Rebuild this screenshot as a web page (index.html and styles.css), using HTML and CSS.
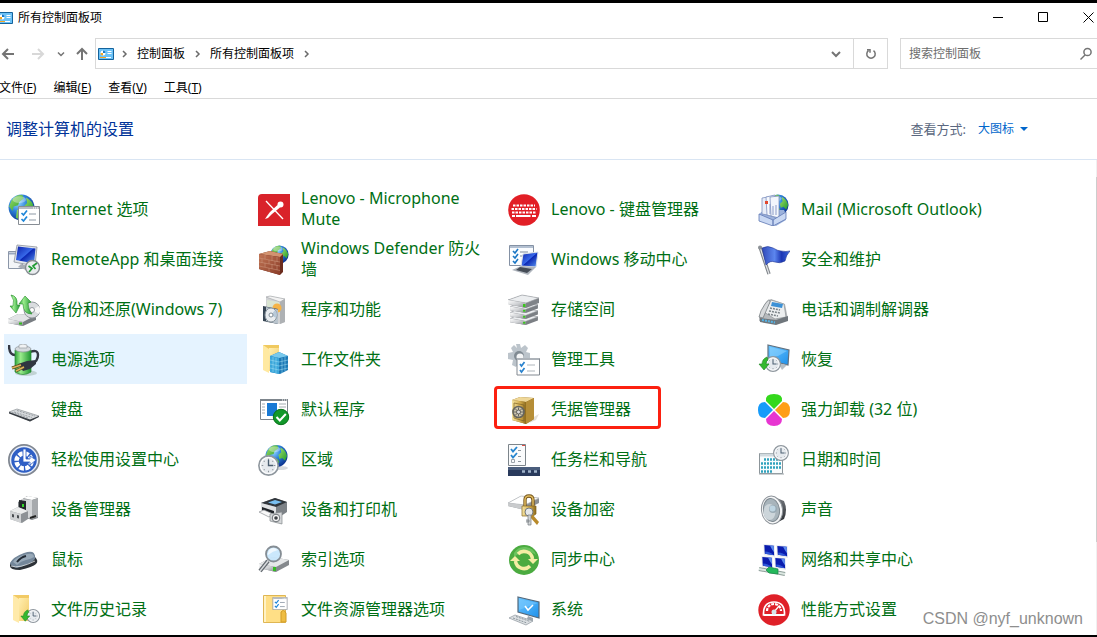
FILE: index.html
```html
<!DOCTYPE html>
<html lang="zh-CN">
<head>
  <meta charset="UTF-8">
  <meta name="viewport" content="width=device-width, initial-scale=1.0">
  <title>所有控制面板项</title>
  <link rel="stylesheet" href="styles.css">
</head>
<body>

<!-- shared gradients and icon parts -->
<svg class="defs" width="0" height="0" aria-hidden="true">
  <defs>
    <radialGradient id="sea" cx=".35" cy=".3" r=".75"><stop offset="0" stop-color="#9fdcff"/><stop offset=".45" stop-color="#2f86dd"/><stop offset="1" stop-color="#0a2f8c"/></radialGradient>
    <linearGradient id="land" x2="1" y2="1"><stop offset="0" stop-color="#a5e06a"/><stop offset="1" stop-color="#1f9a2c"/></linearGradient>
    <linearGradient id="screen" x2="1" y2="1"><stop offset="0" stop-color="#0b1fa8"/><stop offset=".48" stop-color="#3768e8"/><stop offset=".52" stop-color="#0c28b4"/><stop offset="1" stop-color="#5f9cf5"/></linearGradient>
    <linearGradient id="sky" x2="1" y2="1"><stop offset="0" stop-color="#6cc6ff"/><stop offset="1" stop-color="#1e90ea"/></linearGradient>
    <linearGradient id="metal" x2="1" y2="1"><stop offset="0" stop-color="#ffffff"/><stop offset=".5" stop-color="#cfd1d4"/><stop offset="1" stop-color="#85888c"/></linearGradient>
    <linearGradient id="dark" x2="0" y2="1"><stop offset="0" stop-color="#75797f"/><stop offset="1" stop-color="#24272b"/></linearGradient>
    <linearGradient id="folder" x2="1" y2="1"><stop offset="0" stop-color="#ffeeb0"/><stop offset="1" stop-color="#f3cb66"/></linearGradient>
    <linearGradient id="gold" x2="1" y2="0"><stop offset="0" stop-color="#f5e3a0"/><stop offset=".6" stop-color="#cfa84a"/><stop offset="1" stop-color="#8c6a1d"/></linearGradient>
    <linearGradient id="green" x2="1" y2="0"><stop offset="0" stop-color="#2fa33a"/><stop offset=".35" stop-color="#9aec8c"/><stop offset="1" stop-color="#1d9430"/></linearGradient>
    <linearGradient id="brick" x2="1" y2="1"><stop offset="0" stop-color="#c07555"/><stop offset="1" stop-color="#8a3c28"/></linearGradient>
    <linearGradient id="flag" x2="1" y2="0"><stop offset="0" stop-color="#3049b8"/><stop offset=".45" stop-color="#5c86ee"/><stop offset=".7" stop-color="#1c36b4"/><stop offset="1" stop-color="#3c68dd"/></linearGradient>

    <symbol id="globe" viewBox="0 0 24 24">
      <circle cx="12" cy="12" r="11.5" fill="url(#sea)"/>
      <path d="M3 6Q7 0 13 1L14 4 10 7 9 10 5 11 4 15 1 11Z" fill="url(#land)"/>
      <path d="M16 3Q22 6 23 12L21 17 18 14 15 15 14 11 17 8Z" fill="url(#land)"/>
      <path d="M8 14L13 15 15 18 11 23 7 21Z" fill="url(#land)"/>
      <ellipse cx="10" cy="5" rx="6" ry="3" fill="#fff" opacity=".35"/>
    </symbol>
    <symbol id="clock" viewBox="0 0 20 20">
      <circle cx="10" cy="10" r="9.2" fill="#e6eaee" stroke="#8f979e" stroke-width="1.5"/>
      <circle cx="10" cy="10" r="7.6" fill="none" stroke="#fff"/>
      <path d="M10 3.5V5M10 15v1.500M3.500 10H5M15 10h1.500M5.500 5.500l.8.8M14.500 5.500l-.8.8M5.500 14.500l.8-.8M14.500 14.500l-.8-.8" stroke="#8b9299"/>
      <path d="M10 4.500V10H14.500" fill="none" stroke="#4b5e70" stroke-width="1.300"/>
    </symbol>
    <symbol id="checks" viewBox="0 0 22 19">
      <path d="M.5.5h21v18H.5Z" fill="#fff" stroke="#878d94"/>
      <path d="M1 1h20v2H1Z" fill="#b7bcc2"/>
      <path d="M15 2h1M17 2h1M19 2h1" stroke="#fff"/>
      <path d="M3.500 7l2 2 3.500-4.500M3.500 13l2 2 3.500-4.500" fill="none" stroke="#1f86d8" stroke-width="1.700"/>
      <path d="M11 8h7M11 14h7" stroke="#8d99a6" stroke-width="1.200"/>
    </symbol>
    <symbol id="panel" viewBox="0 0 16 12">
      <path d="M.5.5h15v11H.5Z" fill="#6cc2f7" stroke="#14639c"/>
      <circle cx="5" cy="5" r="2.500" fill="#fff"/>
      <path d="M5 5V2.500A2.500 2.500 0 0 1 7.500 5Z" fill="#1478c8"/>
      <path d="M5 5H2.500A2.500 2.500 0 0 0 5 7.500Z" fill="#f5a623"/>
      <path d="M9.500 3.500h4M9.500 5.500h4" stroke="#fff"/>
      <path d="M2 9.500h6" stroke="#f5a623"/><path d="M8 9.500h5" stroke="#fff"/>
    </symbol>
    <symbol id="drive" viewBox="0 0 32 14">
      <path d="M1 6L13 1 31 4V8L18 13 1 10Z" fill="#7b7f84"/>
      <path d="M1 6L13 1 31 4 18 9Z" fill="#eceef0" stroke="#9a9ea3" stroke-width=".6"/>
      <path d="M1 6L18 9V13L1 10Z" fill="url(#metal)"/>
      <path d="M15 9.500h2.500v2H15Z" fill="#39c51d"/>
    </symbol>
    <symbol id="back-clock" viewBox="0 0 24 18">
      <use href="#clock" x="7" y="1" width="16" height="16"/>
      <path d="M9 2Q4 4 4 9H1L6 15 11 9H8Q8 6 10 5Z" fill="#35b82f" stroke="#1b8420" stroke-width=".6"/>
    </symbol>
    <symbol id="pc" viewBox="0 0 14 15">
      <path d="M1 0L13 1 13.500 14 1.500 12Z" fill="#e8ebef"/>
      <path d="M2 1L12 2 12.500 12 2.500 10.500Z" fill="#0a1cae"/>
      <path d="M8 1.700L12 2 12.500 9Q10 6 8 1.700Z" fill="#5d8bee"/>
      <path d="M3 8Q8 8 12 12L3 10.500Z" fill="#2f58d8"/>
    </symbol>
  </defs>
</svg>

<div class="window">
  <header class="titlebar">
    <svg class="title-icon" viewBox="0 0 16 12"><use href="#panel"/></svg>
    <h1 class="title">所有控制面板项</h1>
    <div class="window-buttons">
      <button class="window-btn" aria-label="最小化"><svg viewBox="0 0 11 11"><path d="M0 5.500h10"/></svg></button>
      <button class="window-btn" aria-label="最大化"><svg viewBox="0 0 11 11"><path d="M.5.5h9v9h-9Z"/></svg></button>
      <button class="window-btn" aria-label="关闭"><svg viewBox="0 0 11 11"><path d="M.5.5l10 10M10.500.5l-10 10"/></svg></button>
    </div>
  </header>

  <div class="toolbar">
    <nav class="history">
      <button class="nav-btn" aria-label="后退"><svg viewBox="0 0 14 14"><path d="M13 7H2M7 2L2 7l5 5"/></svg></button>
      <button class="nav-btn disabled" aria-label="前进" disabled><svg viewBox="0 0 14 14"><path d="M1 7h11M7 2l5 5-5 5"/></svg></button>
      <button class="nav-btn small" aria-label="最近浏览的位置"><svg viewBox="0 0 8 14"><path d="M1 5.500l3 3 3-3"/></svg></button>
      <button class="nav-btn" aria-label="上移"><svg viewBox="0 0 14 14"><path d="M7 13V2M2 7l5-5 5 5"/></svg></button>
    </nav>
    <div class="address">
      <svg class="address-icon" viewBox="0 0 16 12"><use href="#panel"/></svg>
      <svg class="chevron" viewBox="0 0 6 8"><path d="M1 1l3 3-3 3"/></svg>
      <a class="crumb" href="#">控制面板</a>
      <svg class="chevron" viewBox="0 0 6 8"><path d="M1 1l3 3-3 3"/></svg>
      <a class="crumb" href="#">所有控制面板项</a>
      <svg class="chevron" viewBox="0 0 6 8"><path d="M1 1l3 3-3 3"/></svg>
      <button class="address-btn drop" aria-label="以前的位置"><svg viewBox="0 0 14 14"><path d="M3 5l4 4 4-4"/></svg></button>
      <button class="address-btn refresh" aria-label="刷新"><svg viewBox="0 0 14 14"><path d="M9.500 3.600A4.200 4.200 0 1 1 4.500 3.600M3 2.700h3v3"/></svg></button>
    </div>
    <div class="search">
      <input class="search-input" type="text" placeholder="搜索控制面板" aria-label="搜索控制面板">
      <svg class="search-icon" viewBox="0 0 14 14"><circle cx="8.500" cy="5" r="3.600"/><path d="M6 8L1.500 12.500"/></svg>
    </div>
  </div>

  <nav class="menubar">
    <button class="menu">文件(<u>F</u>)</button>
    <button class="menu">编辑(<u>E</u>)</button>
    <button class="menu">查看(<u>V</u>)</button>
    <button class="menu">工具(<u>T</u>)</button>
  </nav>

  <div class="heading">
    <h2 class="heading-text">调整计算机的设置</h2>
    <div class="view-by">
      <label class="view-label" for="view">查看方式:</label>
      <select class="view-select" id="view">
        <option>大图标</option>
        <option>小图标</option>
        <option>类别</option>
      </select>
      <svg class="caret" viewBox="0 0 8 4"><path d="M0 0h8L4 4Z"/></svg>
    </div>
  </div>

  <div class="content">
    <main class="items">
      <a class="item" href="#">
        <svg class="icon" viewBox="0 0 32 32"><use href="#globe" width="27" height="27"/><use href="#checks" x="10" y="12" width="22" height="19"/></svg>
        <span>Internet 选项</span>
      </a>
      <a class="item" href="#">
        <svg class="icon" viewBox="0 0 32 32"><path d="M4 0H32V32H0V4Q0 0 4 0Z" fill="#d9232a"/><path d="M8 7L25 25" stroke="#fff" stroke-width="1.300"/><circle cx="22.500" cy="10.500" r="3" fill="#fff"/><path d="M19.500 11L22 13.500 14 20 10 24 7 25 9 22 12 18Z" fill="#fff"/></svg>
        <span>Lenovo - Microphone Mute</span>
      </a>
      <a class="item" href="#">
        <svg class="icon" viewBox="0 0 32 32"><circle cx="16" cy="16" r="15.800" fill="#e21f26"/><path d="M5 11.500h22M3.500 15h25M4 18.500h24" stroke="#fff" stroke-width="2.200" stroke-dasharray="2.500 1"/><path d="M4 22h3M8 22h14.500M24 22h4" stroke="#fff" stroke-width="2.200"/></svg>
        <span>Lenovo - 键盘管理器</span>
      </a>
      <a class="item" href="#">
        <svg class="icon" viewBox="0 0 32 32"><use href="#globe" x="9" width="22" height="22"/><path d="M1 20L6 16H26L28 20V26L18 32 1 27Z" fill="#9cb2dc"/><path d="M4 4L15 2V22L4 20Z" fill="#e9eef8" stroke="#7084b8" stroke-width=".7"/><path d="M8 3L17 1V23L9 21Z" fill="#f7f9fd" stroke="#7084b8" stroke-width=".7"/><path d="M12 3L21 2V24L13 22Z" fill="#f3f6fc" stroke="#7084b8" stroke-width=".7"/><path d="M7 7h3v3H7Z" fill="#e2482f"/><path d="M12 10v10M15 12v9M18 11v10" stroke="#8b9bc8"/><path d="M1 20L15 26V32L1 27ZM15 26L28 18V25L15 32Z" fill="#c9d8f3" stroke="#6178b4" stroke-width=".8"/></svg>
        <span>Mail (Microsoft Outlook)</span>
      </a>

      <a class="item" href="#">
        <svg class="icon" viewBox="0 0 32 32"><path d="M.5 7.500h14v17H.5Z" fill="#f3f5f8" stroke="#8b96a8"/><path d="M1 9.500h13" stroke="#9aa8c0" stroke-width="2"/><path d="M9 1L29 3 27 22 6 18Z" fill="#e2e5ea" stroke="#8c929b" stroke-width=".8"/><path d="M10 2.500L27.500 4.500 26 19.500 8 16Z" fill="url(#screen)"/><path d="M13 20l7 2-2 4-8-3Z" fill="#a7acb5"/><circle cx="24.500" cy="23.500" r="7" fill="#e9ecee" stroke="#858b91" stroke-width="1.400"/><path d="M20.500 22l3.500 2.500-3 3.500M29 19l-4 3 2.500 3" fill="none" stroke="#219c35" stroke-width="1.700"/></svg>
        <span>RemoteApp 和桌面连接</span>
      </a>
      <a class="item" href="#">
        <svg class="icon" viewBox="0 0 32 32"><use href="#globe" x="12" width="19" height="21"/><path d="M1 10L12 7 25 10V28L22 31 1 25Z" fill="#6c2c1e"/><path d="M1 10L12 7 25 10 22 13Z" fill="#d29370"/><path d="M1 10L22 13V31L1 25Z" fill="url(#brick)"/><path d="M1 14l21 4M1 18l21 4M1 22l21 4.500M7 11v4M14 12v5M19 13v5M4 15v4M11 16v4M17 17v4M7 19v4M14 20v5M19 21v5M11 24v4" stroke="#cf9a80" stroke-width=".5"/></svg>
        <span>Windows Defender 防火墙</span>
      </a>
      <a class="item" href="#">
        <svg class="icon" viewBox="0 0 32 32"><path d="M1.500 1.500h24v20h-24Z" fill="#fafcff" stroke="#8491a4"/><path d="M2 3h23" stroke="#b3c0d1" stroke-width="2"/><path d="M5 7l2 2 3-4M5 12l2 2 3-4M5 17l2 2 3-4" fill="none" stroke="#1976c5" stroke-width="1.600"/><path d="M12 8h8M12 12h5" stroke="#7c8a9c"/><path d="M15 10L30 8 28 23 13 22Z" fill="url(#screen)" stroke="#dbe1e8"/><path d="M13 22L28 23 20 31 4 26Z" fill="#afb5bd"/><path d="M12 23l12 2-5 4-11-3Z" fill="#454c56"/></svg>
        <span>Windows 移动中心</span>
      </a>
      <a class="item" href="#">
        <svg class="icon" viewBox="0 0 32 32"><path d="M2 3L11 30" stroke="#7e8388" stroke-width="3.400"/><path d="M2 3L11 30" stroke="#e2e4e7" stroke-width="1.200"/><circle cx="2" cy="3.500" r="2" fill="#8d9297"/><path d="M4 4Q10 1 15 4T23 7Q28 8 32 7 28 11 27 17 22 20 17 18T8 21Z" fill="url(#flag)" stroke="#1d3091" stroke-width=".6"/></svg>
        <span>安全和维护</span>
      </a>

      <a class="item" href="#">
        <svg class="icon" viewBox="0 0 32 32"><path d="M0 25L10 20 28 21V26L15 32 0 29Z" fill="#787d82"/><path d="M0 25L10 20 28 21 15 28Z" fill="#e2e4e6"/><path d="M0 25L15 28V32L0 29Z" fill="url(#metal)"/><path d="M11 28.500h3v2h-3Z" fill="#32b81e"/><circle cx="24" cy="16" r="8" fill="#d9dcdf" stroke="#94999f"/><path d="M24 16L31 12A8 8 0 0 1 31 20Z" fill="#f7f7f7"/><circle cx="24" cy="16" r="2.500" fill="#fff" stroke="#94999f"/><path d="M3 1Q10 2 9 11H12L8 19 2 12 5 12Q7 6 3 1Z" fill="url(#green)" stroke="#218c25" stroke-width=".6"/><path d="M17 2L23 8 20 9Q20 16 24 20 15 20 15 10L11 10Z" fill="url(#green)" stroke="#218c25" stroke-width=".6"/></svg>
        <span>备份和还原(Windows 7)</span>
      </a>
      <a class="item" href="#">
        <svg class="icon" viewBox="0 0 32 32"><path d="M8 3L12 2 27 5V28L22 30 8 28Z" fill="#d0d2d4"/><path d="M8 3L12 2 27 5 22 8Z" fill="#f3f3f3" stroke="#a8abae" stroke-width=".7"/><path d="M22 8L27 5V28L22 30Z" fill="#aeb1b4"/><path d="M9 6L21 8V18L9 16Z" fill="#dae5d2"/><circle cx="19" cy="14" r="4.500" fill="#f5b347"/><path d="M5 12L20 15V30L5 27Z" fill="#384654"/><path d="M8 13L20 15.500V30L8 27Z" fill="#b9c4cd"/><ellipse cx="13" cy="21" rx="6" ry="7" fill="#e9edf0" stroke="#89949d"/><path d="M13 21L17 16Q20 19 18 24Z" fill="#b9cad9"/><circle cx="13" cy="21" r="2" fill="#fff" stroke="#7f8c96"/></svg>
        <span>程序和功能</span>
      </a>
      <a class="item" href="#">
        <svg class="icon" viewBox="0 0 32 32"><use href="#drive" y="19" width="32" height="13"/><use href="#drive" y="13" width="32" height="13"/><use href="#drive" y="7" width="32" height="13"/><path d="M0 6L14 1 31 4V9L18 14 0 10Z" fill="#7f8388"/><path d="M0 6L14 1 31 4 18 9Z" fill="#eceef0" stroke="#9a9ea3" stroke-width=".6"/><path d="M0 6L18 9V14L0 10Z" fill="url(#metal)"/><path d="M15 10h2.500v3H15Z" fill="#39c51d"/></svg>
        <span>存储空间</span>
      </a>
      <a class="item" href="#">
        <svg class="icon" viewBox="0 0 32 32"><path d="M1 23L9 7 13 5 27 10 30 25 18 30 1 27Z" fill="#b7babd"/><path d="M6 18L13 6 26 10 28 23 17 25Z" fill="#eceeef" stroke="#8e9397" stroke-width=".7"/><path d="M14 8L25 10 24 14 13 12Z" fill="#3c91d6"/><path d="M12 14l10 2M11 17l11 2M10 20l10 2" stroke="#7c8489" stroke-width="1.500" stroke-dasharray="2 1"/><path d="M1 23Q2 17 7 10T12 8L5 24Z" fill="#d7d9db" stroke="#777d82" stroke-width=".8"/><path d="M2 24L18 26 30 22V27L18 31 2 28Z" fill="#6f767c"/><path d="M4 26l13 2.500" stroke="#55b4e6" stroke-width="2" stroke-dasharray="2 1"/></svg>
        <span>电话和调制解调器</span>
      </a>

      <a class="item selected" href="#">
        <svg class="icon" viewBox="0 0 32 32"><path d="M1 1Q1 11 7 11M22 8Q30 5 30 11T24 20" fill="none" stroke="#343844" stroke-width="2.400"/><ellipse cx="18" cy="29" rx="11" ry="3" fill="#8ca294" opacity=".4"/><path d="M7 6Q15 2 23 6V28Q15 33 7 28Z" fill="url(#green)" stroke="#268732" stroke-width=".7"/><ellipse cx="15" cy="5" rx="8" ry="3" fill="#d5dade" stroke="#8b9298" stroke-width=".7"/><path d="M11 4V1Q15-1 19 1V4Z" fill="#f0f2f3" stroke="#989fa5" stroke-width=".7"/><path d="M10 20L19 17 28 16 28 20 22 25 15 27Z" fill="#303641"/><path d="M4 24l9-3M8 27l8-4" stroke="#5c4a22" stroke-width="3"/><path d="M4 24l9-3M8 27l8-4" stroke="#dbb45a" stroke-width="1.500"/></svg>
        <span>电源选项</span>
      </a>
      <a class="item" href="#">
        <svg class="icon" viewBox="0 0 32 32"><path d="M5 1H21V26H9L5 23Z" fill="#f0c95f"/><path d="M5 1L11 5V29L5 26Z" fill="#ffe9a1"/><path d="M11 4H21V27H11Z" fill="url(#folder)"/><path d="M12 12L21 8 30 12V26L22 30 12 28Z" fill="#1c79b6"/><path d="M12 12L21 8 30 12 21 14Z" fill="#78c9ed"/><path d="M12 12L21 14V30L12 28Z" fill="#3ba6da"/><path d="M12 16l9 2 9-2M12 20l9 2 9-2M12 24l9 2 9-2M15 13v15M18 13.500v16M24 14v15M27 13v14" stroke="#a5e0f5" stroke-width=".5" fill="none"/></svg>
        <span>工作文件夹</span>
      </a>
      <a class="item" href="#">
        <svg class="icon" viewBox="0 0 32 32"><path d="M8 0l4 0 1 4 4-3 3 3-2 4 4 1v5l-5 1 1 4-4 3-3-3-3 4-4-2 1-5-5-1V9l5-1-2-4 3-3 3 3Z" fill="#bcc4cb"/><circle cx="11" cy="12" r="5" fill="#818b93"/><circle cx="12" cy="13" r="3.500" fill="#f5f6f7"/><path d="M9 14.500h22.500V31H9Z" fill="#fff" stroke="#828991"/><path d="M9 15h22" stroke="#adb3b9" stroke-width="2"/><path d="M12 20l1.500 2 3-4M12 26l1.500 2 3-4" fill="none" stroke="#2b83ce" stroke-width="1.700"/><path d="M19 21h8M19 27h8" stroke="#aeb5bb"/></svg>
        <span>管理工具</span>
      </a>
      <a class="item" href="#">
        <svg class="icon" viewBox="0 0 32 32"><path d="M10 1L31 6 30 21 10 16Z" fill="url(#sky)" stroke="#61707e" stroke-width="1.200"/><path d="M12 3L29 7 20 12 12 13Z" fill="#91d5ff" opacity=".55"/><path d="M20 19L29 21 24 26Z" fill="#b7bfc5"/><use href="#back-clock" y="11" width="24" height="18"/></svg>
        <span>恢复</span>
      </a>

      <a class="item" href="#">
        <svg class="icon" viewBox="0 0 32 32"><path d="M1 18L9 15 31 22 22 27Z" fill="#d7dadd" stroke="#8d9296" stroke-width=".7"/><path d="M1 18L22 25.500 31 22V23L22 27.500 1 19.500Z" fill="#383d43"/><path d="M6 18l18 5.500M9 16.500l18 5.500M4 18.500l16 5.500" stroke="#8a9096" stroke-width=".8" stroke-dasharray="2 1"/></svg>
        <span>键盘</span>
      </a>
      <a class="item" href="#">
        <svg class="icon" viewBox="0 0 32 32"><path d="M2.500 5.500h27v20h-27Z" fill="#fff" stroke="#7d858c"/><path d="M2 6h28" stroke="#7d858c" stroke-width="2"/><path d="M24 6h1M26 6h1M28 6h1" stroke="#fff"/><path d="M4 10h3M4 13h3M4 16h3M4 19h3M21 10h7M21 13h7" stroke="#a4abb1" stroke-width="1.200"/><path d="M9 9h10v13H9Z" fill="#1879d4"/><circle cx="23" cy="23" r="7.700" fill="#12982a" stroke="#087018"/><path d="M18.500 23l3.300 3.500 6-6.500" fill="none" stroke="#fff" stroke-width="2"/></svg>
        <span>默认程序</span>
      </a>
      <a class="item marked" href="#">
        <svg class="icon" viewBox="0 0 32 32"><path d="M24 24L31 20 28 26 21 29Z" fill="#b8b2a0" opacity=".4"/><path d="M4 6L12 3 26 4V25L18 30 4 26Z" fill="#8c6a22"/><path d="M4 6L12 3 26 4 18 8Z" fill="#efd798"/><path d="M4 6L18 8V30L4 26Z" fill="url(#gold)"/><path d="M18 8L26 4V25L18 30Z" fill="#b68e37"/><path d="M6 9L16 11V27L6 24Z" fill="none" stroke="#7d6225" stroke-width=".7"/><circle cx="10.500" cy="18" r="5.500" fill="#cfc7af" stroke="#65645f" stroke-width="1.700"/><path d="M6 18h9M10.500 13.500v9M7.500 15l6 6M13.500 15l-6 6" stroke="#65645f"/><circle cx="10.500" cy="18" r="2" fill="#ddd" stroke="#65645f"/></svg>
        <span>凭据管理器</span>
      </a>
      <a class="item" href="#">
        <svg class="icon" viewBox="0 0 32 32"><path d="M16 15L8 7Q7 0 16 0T24 7Z" fill="#34d81c"/><path d="M15 16L7 24Q0 24 0 16T7 8Z" fill="#169bfa"/><path d="M17 16L25 8Q32 8 32 16T25 24Z" fill="#ff9e16"/><path d="M16 17L24 25Q24 32 16 32T8 25Z" fill="#e735d1"/></svg>
        <span>强力卸载 (32 位)</span>
      </a>

      <a class="item" href="#">
        <svg class="icon" viewBox="0 0 32 32"><circle cx="16" cy="16" r="15" fill="#264cad" stroke="#808791" stroke-width="2"/><circle cx="16" cy="16" r="13.500" fill="#2f5fc5" stroke="#e8edf5" stroke-width="1.500"/><circle cx="16" cy="17" r="7.500" fill="none" stroke="#fff" stroke-width="4.500" stroke-dasharray="4.500 1.400"/><path d="M15 5h3v10h4v-3l6 4-6 5v-3h-7Z" fill="#fff" stroke="#2f5fc5" stroke-width=".8"/></svg>
        <span>轻松使用设置中心</span>
      </a>
      <a class="item" href="#">
        <svg class="icon" viewBox="0 0 32 32"><ellipse cx="22" cy="24" rx="8" ry="2" fill="#9ca3a9" opacity=".4"/><use href="#globe" x="7" width="23" height="24"/><use href="#clock" y="11" width="21" height="21"/></svg>
        <span>区域</span>
      </a>
      <a class="item" href="#">
        <svg class="icon" viewBox="0 0 32 32"><path d="M.5.5h17v21H.5Z" fill="#fafbfc" stroke="#7d858b"/><path d="M14 1.500h3" stroke="#e14f44"/><path d="M3 5l2 2.500L9 3M3 11l2 2.500L9 9" fill="none" stroke="#2585cf" stroke-width="1.800"/><path d="M3.500 15.500h3v3h-3Z" fill="none" stroke="#9da4aa"/><path d="M10 6.500h3M10 12.500h3M10 17.500h3" stroke="#8f979e"/><path d="M0 23H32V32H0Z" fill="#293a5c"/><path d="M0 23H32V26H0Z" fill="#4a5d7c"/><path d="M14 27.500h3M20 27.500h3M26 27.500h3" stroke="#9fb2c9" stroke-width="2.500"/></svg>
        <span>任务栏和导航</span>
      </a>
      <a class="item" href="#">
        <svg class="icon" viewBox="0 0 32 32"><path d="M1.500 9.500h23v20h-23Z" fill="#f9fcfd" stroke="#8c959a"/><path d="M2 11h22" stroke="#d1dadf" stroke-width="3"/><path d="M6 15.500h18M3 19.500h21M3 23.500h21M3 27.500h12" stroke="#32a2bd" stroke-width="2.600" stroke-dasharray="2 1"/><path d="M1 30h25" stroke="#9da5aa"/><use href="#clock" x="15" y="1" width="16" height="16"/></svg>
        <span>日期和时间</span>
      </a>

      <a class="item" href="#">
        <svg class="icon" viewBox="0 0 32 32"><path d="M10 8L19 2 30 4V24L24 26 18 24 10 22Z" fill="#85898d"/><path d="M15 4L20 2 30 4 24 6Z" fill="#fff"/><path d="M14 5L24 6V25L14 22Z" fill="#d4d6d8"/><path d="M24 6L30 4V23L24 25Z" fill="#a7aaad"/><path d="M11 6L18 7V18L11 16Z" fill="#24282c"/><path d="M14 10h2v3h-2Z" fill="#35d52a"/><path d="M2 17L10 13 20 17V25L14 29 2 25Z" fill="#8e9296"/><path d="M2 17L10 13 20 17 13 20Z" fill="#eceded"/><path d="M2 17L13 20V29L2 25Z" fill="#d0d2d4"/><path d="M4 20l2 .5v3l-2-.5ZM9 21l2 .5v3L9 24Z" fill="#4a4e52"/><path d="M22 24l6-2" stroke="#222" stroke-width="2"/></svg>
        <span>设备管理器</span>
      </a>
      <a class="item" href="#">
        <svg class="icon" viewBox="0 0 32 32"><path d="M3 9L17 4 29 8V18L20 24 3 16Z" fill="#7d8287"/><path d="M3 9L17 4 29 8 18 13Z" fill="#30353b"/><path d="M10 8.500L17 6 24 8 17 10.500Z" fill="#79bff0"/><path d="M3 9L18 13V22L3 16Z" fill="#dfe1e3"/><path d="M4 13l12 4v3L4 16Z" fill="#202429"/><path d="M1 18L6 16 15 20 11 23Z" fill="#f8f8f8" stroke="#8c9195" stroke-width=".7"/><path d="M12 20L24 18V30L12 27Z" fill="#d5d7d9" stroke="#84898d" stroke-width=".7"/><circle cx="18" cy="24" r="3.800" fill="#f4f4f4" stroke="#6c7277"/><circle cx="18" cy="24" r="1.800" fill="#3d4145"/></svg>
        <span>设备和打印机</span>
      </a>
      <a class="item" href="#">
        <svg class="icon" viewBox="0 0 32 32"><path d="M0 9L13 2 31 4V9L17 16 0 12Z" fill="#8d9195"/><path d="M0 9L13 2 31 4 17 11Z" fill="#fff" stroke="#b5b8bb" stroke-width=".7"/><path d="M0 9L17 11V16L0 12Z" fill="#c9cbcd"/><path d="M17 12V6Q17 2 21 2T25 6V12" fill="none" stroke="#74541a" stroke-width="3.300"/><path d="M17 12V6Q17 2 21 2T25 6V12" fill="none" stroke="#e0bb60" stroke-width="1.500"/><path d="M14 12H28V20L25 22H14Z" fill="url(#gold)" stroke="#84651f" stroke-width=".7"/><path d="M24 20L31 28 29 31 22 23Z" fill="#b88a2b"/><circle cx="21" cy="18" r="4" fill="#e6e8e9" stroke="#74797e"/><path d="M20 21h3v10h-3ZM18 26h3v2h-3" fill="#d1d4d6" stroke="#74797e" stroke-width=".7"/></svg>
        <span>设备加密</span>
      </a>
      <a class="item" href="#">
        <svg class="icon" viewBox="0 0 32 32"><path d="M16 3L26 7Q30 16 26 25L16 30Z" fill="url(#dark)"/><ellipse cx="14" cy="16" rx="10.500" ry="14" fill="#f5f6f7" stroke="#8d9399" transform="rotate(-8 14 16)"/><ellipse cx="13.500" cy="16" rx="8" ry="11.500" fill="#a8b4bb" stroke="#808b92" transform="rotate(-8 13.500 16)"/><ellipse cx="11.500" cy="18" rx="6" ry="8" fill="#ccd5da"/><circle cx="15" cy="15" r="4" fill="#9aabb5"/><circle cx="14.500" cy="14.500" r="3" fill="#bed5e2"/></svg>
        <span>声音</span>
      </a>

      <a class="item" href="#">
        <svg class="icon" viewBox="0 0 32 32"><path d="M2 20Q6 13 16 10T27 13Q31 17 28 20T12 26Q2 26 2 22Z" fill="#2d3238"/><path d="M2 19Q5 13 16 9T27 13Q28 16 22 19T9 24Q2 22 2 19Z" fill="#74879a"/><path d="M5 18Q8 13 17 10.500T26 13Q23 15 18 16T9 21Z" fill="#98a9b8"/><path d="M9 18Q13 13 18 12" fill="none" stroke="#222b35" stroke-width="2"/><path d="M3 22Q11 25 27 17" fill="none" stroke="#e0e5e8" stroke-width=".8"/></svg>
        <span>鼠标</span>
      </a>
      <a class="item" href="#">
        <svg class="icon" viewBox="0 0 32 32"><path d="M1 20L14 13 31 16V21L18 28 1 24Z" fill="#85898d"/><path d="M1 20L14 13 31 16 18 23Z" fill="#e6e8e9"/><path d="M1 20L18 23V28L1 24Z" fill="url(#metal)"/><path d="M15 23h3v4h-3Z" fill="#34bb22"/><path d="M10 17L2 27" stroke="#62696f" stroke-width="4"/><path d="M10 17L2 27" stroke="#d8dbdd" stroke-width="1.500"/><circle cx="15.500" cy="10" r="7.500" fill="#c5e5fc" fill-opacity=".9" stroke="#858d94" stroke-width="1.800"/><path d="M10 9Q11 4 16 4L20 6Q15 7 10 11Z" fill="#fff" opacity=".7"/></svg>
        <span>索引选项</span>
      </a>
      <a class="item" href="#">
        <svg class="icon" viewBox="0 0 32 32"><circle cx="16" cy="16" r="15" fill="#4bab40"/><path d="M6 9Q10 2 18 3T28 11Q18 3 6 13Z" fill="#73c965" opacity=".8"/><path d="M10 10A8.500 8.500 0 0 1 24.500 15" fill="none" stroke="#f5eda4" stroke-width="3.500"/><path d="M20 15h10l-5 5Z" fill="#f5eda4"/><path d="M22 22A8.500 8.500 0 0 1 7.500 17" fill="none" stroke="#f5eda4" stroke-width="3.500"/><path d="M2 17h10L7 12Z" fill="#f5eda4"/></svg>
        <span>同步中心</span>
      </a>
      <a class="item" href="#">
        <svg class="icon" viewBox="0 0 32 32"><use href="#pc" x="4" width="14" height="14"/><use href="#pc" x="17" y="1" width="14" height="14"/><use href="#pc" x="2" y="12" width="14" height="14"/><use href="#pc" x="15" y="13" width="14" height="14"/><path d="M1 25L27 30" stroke="#8d9e99" stroke-width="4"/><path d="M1 25L27 30" stroke="#dce8e2" stroke-width="2"/><path d="M8 26L11 23 20 25 20 30 11 29Z" fill="#24b85b" stroke="#168445" stroke-width=".7"/></svg>
        <span>网络和共享中心</span>
      </a>

      <a class="item" href="#">
        <svg class="icon" viewBox="0 0 32 32"><path d="M5 1H21V26H9L5 23Z" fill="#f2ca65"/><path d="M5 1L11 5V29L5 26Z" fill="#ffeaaa"/><path d="M11 4H21V27H11Z" fill="url(#folder)"/><use href="#back-clock" x="12" y="13" width="21" height="18"/></svg>
        <span>文件历史记录</span>
      </a>
      <a class="item" href="#">
        <svg class="icon" viewBox="0 0 32 32"><path d="M5.500 1.500h22v27h-22Z" fill="#ffdf86" stroke="#dfb653"/><path d="M7 2v26" stroke="#fff2c4" stroke-width="2"/><path d="M23 28V18L25.500 16 28 19V28Z" fill="#efbd42" stroke="#d19c28"/><use href="#checks" x="14" y="3" width="16" height="13"/></svg>
        <span>文件资源管理器选项</span>
      </a>
      <a class="item" href="#">
        <svg class="icon" viewBox="0 0 32 32"><path d="M10 3L31 8V24L10 18Z" fill="url(#sky)" stroke="#53687b" stroke-width="1.200"/><path d="M11 5L30 9 11 16Z" fill="#7bcaff" opacity=".55"/><path d="M17 12l3 4 5-5" fill="none" stroke="#fff" stroke-width="1.500"/><path d="M20 22l5 2v3l-6-2Z" fill="#9ea7af"/><path d="M1 24L7 21 25 27 18 31Z" fill="#dce0e3" stroke="#8e969d" stroke-width=".7"/><path d="M5 24l14 5M8 22.500l14 5" stroke="#8e989f" stroke-dasharray="2 1"/></svg>
        <span>系统</span>
      </a>
      <a class="item" href="#">
        <svg class="icon" viewBox="0 0 32 32"><circle cx="16" cy="16" r="15.700" fill="#df2028"/><path d="M5.500 21Q5 8 16 8T26.500 21Z" fill="none" stroke="#fff" stroke-width="1.700"/><path d="M9 17A7 7 0 0 1 23 17" fill="none" stroke="#fff" stroke-width="2.200" stroke-dasharray="3 1"/><path d="M6 21H26" stroke="#fff" stroke-width="2"/><path d="M16 18L21 12" stroke="#fff" stroke-width="1.300"/><circle cx="16" cy="18" r="2.500" fill="#d7e5ea"/></svg>
        <span>性能方式设置</span>
      </a>
    </main>
    <div class="scrollbar"><div class="scroll-thumb"></div></div>
  </div>
  <p class="watermark">CSDN @nyf_unknown</p>
</div>

</body>
</html>
```

FILE: styles.css
```css
*,
*::after {
  box-sizing: border-box;
}

body {
  margin: 0;
  font-family: "Noto Sans", "Noto Sans CJK SC", sans-serif;
  font-size: 12px;
  line-height: 20px;
  color: #000;
  background-color: #fff;
}

button,
input,
select {
  margin: 0;
  padding: 0;
  border: none;
  background: none;
  font: inherit;
  color: inherit;
}

h1,
h2,
p {
  margin: 0;
  font-weight: normal;
}

svg {
  display: block;
  flex-shrink: 0;
}

.defs {
  position: absolute;
}

.window {
  position: relative;
  display: flex;
  flex-direction: column;
  min-height: 100vh;
  border-top: 3px solid #000;
  border-bottom: 2px solid #000;
  overflow: hidden;
}

/* title bar */
.titlebar {
  display: flex;
  align-items: center;
  height: 29px;
}

.title-icon {
  width: 16px;
  height: 12px;
  margin-left: -3px;
}

.title {
  flex: 1;
  margin-left: 5px;
  font-size: 12px;
}

.window-buttons {
  display: flex;
  gap: 34px;
  padding-right: 3px;
}

.window-btn svg {
  width: 11px;
  height: 11px;
  fill: none;
  stroke: #000;
}

/* address bar */
.toolbar {
  display: flex;
  align-items: center;
  margin-top: 6px;
}

.history {
  display: flex;
  align-items: center;
  width: 95px;
  padding-left: 1px;
}

.nav-btn {
  margin-right: 16px;
}

.nav-btn svg {
  width: 14px;
  height: 14px;
  fill: none;
  stroke: #747474;
  stroke-width: 2;
}

.nav-btn.disabled {
  margin-right: 12px;
}

.nav-btn.disabled svg {
  stroke: #d8d8d8;
}

.nav-btn.small {
  margin-right: 10px;
}

.nav-btn:last-child {
  margin-right: 0;
}

.nav-btn.small svg {
  width: 8px;
  stroke-width: 1.5;
}

.address {
  display: flex;
  align-items: center;
  flex: 1;
  height: 31px;
  padding-left: 2px;
  border: 1px solid #d9d9d9;
}

.address-icon {
  width: 16px;
  height: 12px;
  margin-right: 8px;
}

.chevron {
  width: 6px;
  height: 8px;
  fill: none;
  stroke: #6b6b6b;
  stroke-width: 1.5;
}

.crumb {
  margin: 0 10px 0 9px;
  color: #000;
  text-decoration: none;
}

.address-btn {
  display: flex;
  align-items: center;
  justify-content: center;
  width: 34px;
  height: 29px;
}

.address-btn svg {
  width: 14px;
  height: 14px;
  fill: none;
  stroke: #747474;
  stroke-width: 2;
}

.drop {
  margin-left: auto;
}

.refresh {
  border-left: 1px solid #d9d9d9;
}

.refresh svg {
  stroke-width: 1.5;
}

.search {
  display: flex;
  align-items: center;
  width: 197px;
  height: 31px;
  margin-left: 12px;
  padding: 0 4px 0 8px;
  border: 1px solid #d9d9d9;
  border-right: none;
}

.search-input {
  flex: 1;
  min-width: 0;
  outline: none;
}

.search-input::placeholder {
  color: #6d6d6d;
  opacity: 1;
}

.search-icon {
  width: 14px;
  height: 14px;
  fill: none;
  stroke: #747474;
  stroke-width: 1.5;
}

/* menu */
.menubar {
  display: flex;
  gap: 17px;
  padding-top: 9px;
  border-bottom: 1px solid #d9d9d9;
}

.menu:first-child {
  margin-left: -1px;
}

/* heading */
.heading {
  display: flex;
  align-items: center;
  justify-content: space-between;
  height: 61px;
  padding: 0 69px 0 6px;
  border-bottom: 1px solid #d9e5f3;
}

.heading-text {
  font-size: 16px;
  color: #003399;
}

.view-by {
  display: flex;
  align-items: center;
}

.view-label {
  margin-right: 12px;
  font-size: 13px;
  color: #5a6780;
}

.view-select {
  width: 38px;
  appearance: none;
  color: #0066cc;
}

.caret {
  width: 8px;
  height: 4px;
  margin-left: 4px;
  fill: #0066cc;
}

/* items */
.content {
  display: flex;
  flex: 1;
}

.items {
  flex: 1;
  display: grid;
  grid-template-columns: repeat(auto-fill, 243px);
  grid-auto-rows: 50px;
  column-gap: 7px;
  padding: 24px 0 0 4px;
}

.item {
  position: relative;
  display: flex;
  align-items: center;
  gap: 11px;
  padding: 0 8px 0 4px;
  font-size: 16px;
  line-height: 21px;
  color: #006f14;
  text-decoration: none;
}

.item.selected {
  background-color: #e5f3ff;
}

.item.marked::after {
  content: "";
  position: absolute;
  top: 2px;
  left: -10px;
  width: 167px;
  height: 43px;
  border: 3px solid #fc2010;
  border-radius: 4px;
}

.icon {
  width: 32px;
  height: 32px;
  margin-top: 2px;
}

.scrollbar {
  width: 1px;
  padding-top: 17px;
  background-color: #f0f0f0;
}

.scroll-thumb {
  height: 365px;
  background-color: #cdcdcd;
}

.watermark {
  position: absolute;
  right: 14px;
  bottom: 6px;
  font-family: "Liberation Sans", sans-serif;
  font-size: 16px;
  color: #8e8e8e;
}
```
